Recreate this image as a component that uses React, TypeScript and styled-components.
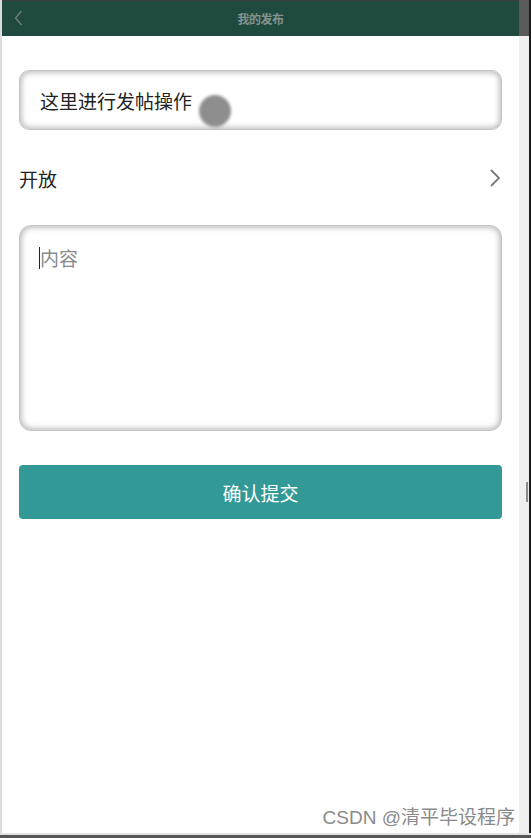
import styled, { createGlobalStyle } from 'styled-components';

const GlobalStyle = createGlobalStyle`
  html, body {
    margin: 0;
    padding: 0;
    background: #ffffff;
  }
  * {
    box-sizing: border-box;
  }
`;

const FONT = `"Noto Sans CJK SC", "Noto Sans", "Liberation Sans", sans-serif`;

const App = () => {
  return (
    <Frame>
      <GlobalStyle />
      <Window>
        <Page>
          <Header>
            <BackButton>
              <svg width="9" height="16" viewBox="0 0 9 16" fill="none">
                <polyline points="7.5,1 1.5,8 7.5,15" stroke="#6f8079" strokeWidth="1.4" />
              </svg>
            </BackButton>
            <Title>我的发布</Title>
          </Header>
          <Content>
            <TitleBox>
              <TitleText>这里进行发帖操作</TitleText>
              <Cursor />
            </TitleBox>
            <OptionRow>
              <OptionLabel>开放</OptionLabel>
              <svg width="12" height="20" viewBox="0 0 12 20" fill="none">
                <polyline points="2,2 10,10 2,18" stroke="#7a7a7a" strokeWidth="1.8" />
              </svg>
            </OptionRow>
            <BodyBox>
              <Caret />
              <Placeholder>内容</Placeholder>
            </BodyBox>
            <SubmitButton>确认提交</SubmitButton>
          </Content>
        </Page>
        <ScrollTrack>
          <TrackTop />
          <Thumb />
        </ScrollTrack>
        <EdgeLine />
      </Window>
      <BottomBar />
      <Watermark>CSDN @清平毕设程序</Watermark>
    </Frame>
  );
};

const Frame = styled.div`
  position: relative;
  height: 100vh;
  display: flex;
  flex-direction: column;
  font-family: ${FONT};
`;

const Window = styled.div`
  flex: 1;
  display: flex;
`;

const Page = styled.div`
  width: 519px;
  border-left: 2px solid #dcdcdc;
  display: flex;
  flex-direction: column;
`;

const Header = styled.div`
  height: 36px;
  background: #1f4a40;
  border-top: 1px solid #3a3a3a;
  display: flex;
  align-items: center;
  justify-content: center;
  position: relative;
`;

const BackButton = styled.div`
  position: absolute;
  left: 12px;
  top: 9px;
  display: flex;
`;

const Title = styled.div`
  color: #84928d;
  font-size: 12px;
  font-weight: 700;
  letter-spacing: -0.5px;
`;

const Content = styled.div`
  padding: 34px 17px 0 17px;
  display: flex;
  flex-direction: column;
`;

const TitleBox = styled.div`
  position: relative;
  height: 60px;
  border: 1px solid #c4c4c4;
  border-radius: 10px;
  box-shadow: inset 0 0 6px 1px rgba(0, 0, 0, 0.32);
  display: flex;
  align-items: center;
  padding-left: 20px;
`;

const TitleText = styled.span`
  font-size: 19px;
  color: #222222;
`;

const Cursor = styled.div`
  position: absolute;
  left: 179px;
  top: 24px;
  width: 32px;
  height: 32px;
  border-radius: 50%;
  background: #8e8e8e;
  filter: blur(1.5px);
`;

const OptionRow = styled.div`
  margin-top: 28px;
  height: 40px;
  display: flex;
  align-items: center;
  justify-content: space-between;
  padding-right: 1px;
`;

const OptionLabel = styled.span`
  font-size: 19px;
  color: #222222;
`;

const BodyBox = styled.div`
  margin-top: 27px;
  height: 206px;
  border: 1px solid #c4c4c4;
  border-radius: 12px;
  box-shadow: inset 0 0 6px 1px rgba(0, 0, 0, 0.32);
  padding: 20px 20px 0 19px;
  display: flex;
  align-items: flex-start;
`;

const Caret = styled.div`
  width: 1px;
  height: 22px;
  background: #222222;
  margin-top: 1px;
`;

const Placeholder = styled.span`
  font-size: 19px;
  line-height: 24px;
  color: #8a8a8a;
`;

const SubmitButton = styled.button`
  margin-top: 34px;
  height: 54px;
  border: none;
  border-radius: 4px;
  background: #339997;
  color: #ffffff;
  font-family: ${FONT};
  font-size: 19px;
  cursor: pointer;
`;

const ScrollTrack = styled.div`
  position: relative;
  width: 10px;
  background: #efefef;
  display: flex;
  flex-direction: column;
`;

const TrackTop = styled.div`
  height: 36px;
  background: #5a5a5a;
`;

const Thumb = styled.div`
  position: absolute;
  left: 7px;
  top: 482px;
  width: 2px;
  height: 20px;
  background: #8a8a8a;
`;

const EdgeLine = styled.div`
  width: 2px;
  background: #1a1a1a;
`;

const BottomBar = styled.div`
  height: 5px;
  background: #555555;
  border-top: 2px solid #e2e2e2;
`;

const Watermark = styled.div`
  position: absolute;
  right: 16px;
  bottom: 9px;
  font-family: "Liberation Sans", "Noto Sans CJK SC", sans-serif;
  font-size: 19px;
  color: #8a8a8a;
`;

export default App;
